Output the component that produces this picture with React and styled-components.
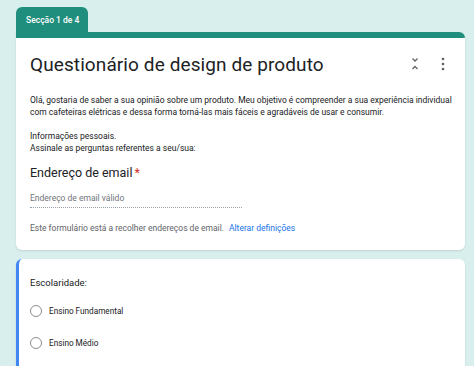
import React from 'react';
import styled, { createGlobalStyle } from 'styled-components';

const GlobalStyle = createGlobalStyle`
  html, body {
    margin: 0;
    padding: 0;
    background: #d8efed;
    font-family: Roboto, "Liberation Sans", Arial, sans-serif;
    color: #202124;
  }
  * { box-sizing: border-box; }
`;

const Page = styled.div`
  width: 474px;
  height: 366px;
  overflow: hidden;
  padding: 7px 9px 0 16px;
  display: flex;
  flex-direction: column;
  gap: 9px;
`;

const Section = styled.div`
  display: flex;
  flex-direction: column;
`;

const Tab = styled.div`
  align-self: flex-start;
  height: 25px;
  padding: 0 9px 0 10px;
  display: flex;
  align-items: center;
  background: #1f8e7d;
  color: #fff;
  font-size: 8.5px;
  font-weight: 500;
  border-radius: 6px 6px 0 0;
`;

const Card = styled.div`
  flex: ${p => (p.grow ? 1 : 'none')};
  background: #fff;
  border-top: ${p => (p.top ? '6px solid #1f8e7d' : 'none')};
  border-left: ${p => (p.accent ? '3px solid #4285f4' : 'none')};
  border-radius: ${p => (p.top ? '0 6px 6px 6px' : '6px 6px 0 0')};
  box-shadow: 0 1px 2px rgba(60, 64, 67, 0.15);
  padding: ${p => p.pad};
  display: flex;
  flex-direction: column;
`;

const TitleRow = styled.div`
  display: flex;
  align-items: center;
  height: 34px;
`;

const Title = styled.h1`
  flex: 1;
  margin: 0;
  font-size: 19px;
  font-weight: 400;
  letter-spacing: 0.1px;
  color: #202124;
`;

const IconButton = styled.div`
  width: 28px;
  display: flex;
  justify-content: center;
  align-items: center;
  color: #5f6368;
`;

const Text = styled.p`
  margin: ${p => p.m || '0'};
  font-size: 8.5px;
  line-height: 11.5px;
  color: #202124;
`;

const Question = styled.div`
  margin-top: 11px;
  font-size: 12.5px;
  color: #202124;
  span { color: #d93025; margin-left: 2px; }
`;

const Field = styled.div`
  margin-top: 13px;
  width: 212px;
  padding-bottom: 4px;
  font-size: 8.5px;
  color: #70757a;
  border-bottom: 1px dotted #9aa0a6;
`;

const Note = styled.div`
  margin-top: 15px;
  font-size: 8.5px;
  color: #5f6368;
  a { color: #1a73e8; text-decoration: none; margin-left: 5px; }
`;

const Label = styled.div`
  font-size: 9.5px;
  color: #202124;
  margin-bottom: 7px;
`;

const Option = styled.label`
  display: flex;
  align-items: center;
  gap: 7px;
  height: 32px;
  font-size: 8.2px;
  color: #202124;
`;

const Radio = styled.span`
  width: 12px;
  height: 12px;
  border-radius: 50%;
  border: 1.3px solid #8a8e93;
`;

const Unfold = () => (
  <svg width="10" height="14" viewBox="0 0 10 14" fill="none" stroke="#5f6368" strokeWidth="1.3">
    <path d="M2.5 1.5 L5 4 L7.5 1.5" />
    <path d="M2.5 12 L5 9.5 L7.5 12" />
  </svg>
);

const Dots = () => (
  <svg width="4" height="14" viewBox="0 0 4 14" fill="#5f6368">
    <circle cx="2" cy="2" r="1.3" />
    <circle cx="2" cy="7" r="1.3" />
    <circle cx="2" cy="12" r="1.3" />
  </svg>
);

export default function App() {
  return (
    <Page>
      <GlobalStyle />
      <Section>
        <Tab>Secção 1 de 4</Tab>
        <Card top pad="9px 8px 17px 14px">
          <TitleRow>
            <Title>Questionário de design de produto</Title>
            <IconButton><Unfold /></IconButton>
            <IconButton><Dots /></IconButton>
          </TitleRow>
          <Text m="14px 0 0">
            Olá, gostaria de saber a sua opinião sobre um produto. Meu objetivo é compreender a sua experiência individual
            <br />
            com cafeteiras elétricas e dessa forma torná-las mais fáceis e agradáveis de usar e consumir.
          </Text>
          <Text m="13px 0 0">
            Informações pessoais.
            <br />
            Assinale as perguntas referentes a seu/sua:
          </Text>
          <Question>Endereço de email<span>*</span></Question>
          <Field>Endereço de email válido</Field>
          <Note>
            Este formulário está a recolher endereços de email.<a href="#">Alterar definições</a>
          </Note>
        </Card>
      </Section>
      <Card accent grow pad="18px 8px 0 11px">
        <Label>Escolaridade:</Label>
        <Option><Radio />Ensino Fundamental</Option>
        <Option><Radio />Ensino Médio</Option>
      </Card>
    </Page>
  );
}
